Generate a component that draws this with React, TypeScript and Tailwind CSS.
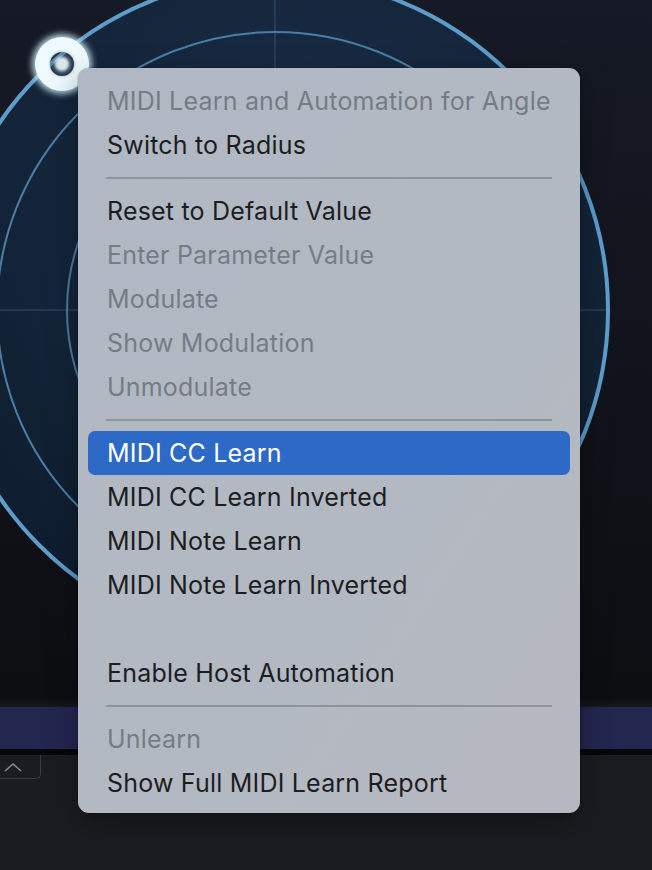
import React from "react";

type Item =
  | { kind: "item"; label: string; disabled?: boolean; active?: boolean }
  | { kind: "sep" }
  | { kind: "blank" };

const items: Item[] = [
  { kind: "item", label: "MIDI Learn and Automation for Angle", disabled: true },
  { kind: "item", label: "Switch to Radius" },
  { kind: "sep" },
  { kind: "item", label: "Reset to Default Value" },
  { kind: "item", label: "Enter Parameter Value", disabled: true },
  { kind: "item", label: "Modulate", disabled: true },
  { kind: "item", label: "Show Modulation", disabled: true },
  { kind: "item", label: "Unmodulate", disabled: true },
  { kind: "sep" },
  { kind: "item", label: "MIDI CC Learn", active: true },
  { kind: "item", label: "MIDI CC Learn Inverted" },
  { kind: "item", label: "MIDI Note Learn" },
  { kind: "item", label: "MIDI Note Learn Inverted" },
  { kind: "blank" },
  { kind: "item", label: "Enable Host Automation" },
  { kind: "sep" },
  { kind: "item", label: "Unlearn", disabled: true },
  { kind: "item", label: "Show Full MIDI Learn Report" },
];

function Scope() {
  const cx = 275;
  const cy = 310;
  return (
    <svg width="652" height="697" viewBox="0 0 652 697" className="block">
      <defs>
        <linearGradient id="bg" x1="0" y1="0" x2="0" y2="1">
          <stop offset="0" stopColor="#161a26" />
          <stop offset="1" stopColor="#0d0e12" />
        </linearGradient>
        <radialGradient id="disc" cx="0.55" cy="0.3" r="0.75">
          <stop offset="0" stopColor="#1a2d47" />
          <stop offset="0.6" stopColor="#132438" />
          <stop offset="1" stopColor="#0d1b2c" />
        </radialGradient>
        <clipPath id="clip">
          <circle cx={cx} cy={cy} r="333" />
        </clipPath>
        <mask id="hole">
          <rect width="652" height="697" fill="white" />
          <circle cx="62" cy="64" r="12" fill="black" />
        </mask>
        <filter id="glow" x="-1" y="-1" width="3" height="3">
          <feGaussianBlur stdDeviation="3" />
        </filter>
        <filter id="soft" x="-1" y="-1" width="3" height="3">
          <feGaussianBlur stdDeviation="1.5" />
        </filter>
      </defs>
      <rect width="652" height="697" fill="url(#bg)" />
      <circle cx={cx} cy={cy} r="333" fill="url(#disc)" />
      <g clipPath="url(#clip)" stroke="#29435c" strokeWidth="1.5">
        <line x1={cx} y1="0" x2={cx} y2="697" />
        <line x1="0" y1={cy} x2="652" y2={cy} />
      </g>
      <circle cx={cx} cy={cy} r="208" fill="none" stroke="#4b7ca3" strokeWidth="2" />
      <circle cx={cx} cy={cy} r="278" fill="none" stroke="#4b7ea6" strokeWidth="2" />
      <circle cx={cx} cy={cy} r="333" fill="none" stroke="#5c9dcb" strokeWidth="4" />
      <g mask="url(#hole)">
        <circle cx="62" cy="64" r="30" fill="#cdeff9" opacity="0.85" filter="url(#glow)" />
        <circle cx="62" cy="64" r="27" fill="#eefafd" />
      </g>
      <circle cx="62" cy="64" r="10" fill="none" stroke="#4a6676" strokeWidth="4" opacity="0.55" filter="url(#soft)" />
      <circle cx="62" cy="64" r="7.5" fill="#dde9ee" filter="url(#soft)" />
    </svg>
  );
}

export default function App() {
  return (
    <div
      className="relative w-[652px] h-[870px] overflow-hidden bg-[#1b1c21]"
      style={{ fontFamily: "Inter, 'Noto Sans', sans-serif" }}
    >
      <Scope />
      <div className="h-[10px] bg-gradient-to-b from-[#0c0d0f] to-[#17181b]" />
      <div className="h-[42px] bg-[#23264f]" />
      <div className="h-[6px] bg-[#060606]" />
      <div className="flex">
        <div className="w-[41px] h-[24px] border border-t-0 border-l-0 border-[#3b3c42] rounded-br-[5px] flex items-center justify-center pr-[14px]">
          <svg width="20" height="12" viewBox="0 0 20 12">
            <path d="M2 10 L10 3 L18 10" fill="none" stroke="#8a8b90" strokeWidth="1.5" />
          </svg>
        </div>
      </div>

      <div className="absolute left-[78px] top-[68px] w-[502px] rounded-[11px] bg-gradient-to-br from-[#b0b8c3] via-[#b2b9c3] to-[#b6b8c0] pt-[11px] pb-[8px] shadow-[0_0_0_0.5px_rgba(0,0,0,0.25),0_10px_30px_rgba(0,0,0,0.35)]">
        {items.map((it, i) => {
          if (it.kind === "sep")
            return (
              <div key={i} className="h-[22px] flex items-center px-[28px]">
                <div className="h-[2px] w-full bg-[#8f949c]" />
              </div>
            );
          if (it.kind === "blank") return <div key={i} className="h-[44px]" />;
          return (
            <div
              key={i}
              className={
                "mx-[10px] h-[44px] flex items-center px-[19px] pt-[2px] rounded-[7px] text-[25px] tracking-[0.2px] " +
                (it.active
                  ? "bg-[#2d69c7] text-white"
                  : it.disabled
                  ? "text-[#767c86]"
                  : "text-[#1d1d1f]")
              }
            >
              {it.label}
            </div>
          );
        })}
      </div>
    </div>
  );
}
